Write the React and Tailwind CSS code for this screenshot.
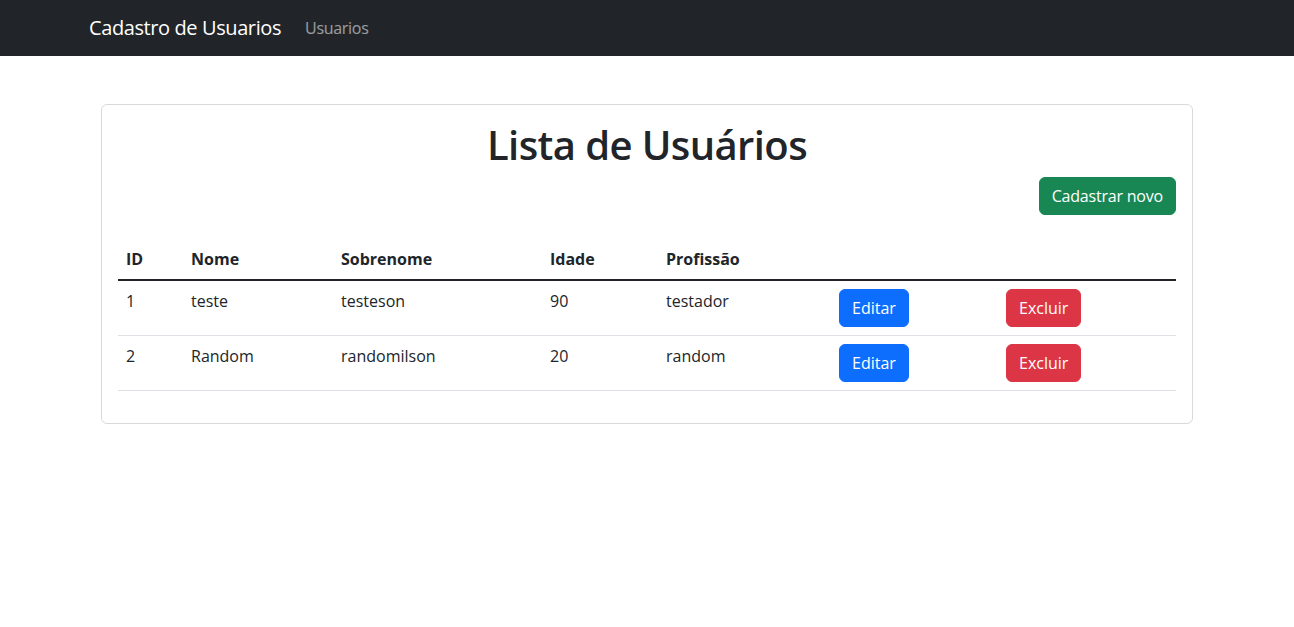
import React from "react";

const users = [
  { id: 1, nome: "teste", sobrenome: "testeson", idade: 90, profissao: "testador" },
  { id: 2, nome: "Random", sobrenome: "randomilson", idade: 20, profissao: "random" },
];

const font = { fontFamily: '"Open Sans", "Noto Sans", sans-serif' };

export default function App() {
  return (
    <div className="min-h-screen bg-white text-[#212529] text-base" style={font}>
      {/* Navbar */}
      <nav className="bg-[#212529] h-14 flex items-center">
        <div className="w-[1140px] mx-auto px-3 flex items-center">
          <span className="text-white text-xl leading-[30px] mr-4 tracking-[-0.4px]">Cadastro de Usuarios</span>
          <span className="text-white/55 px-2 leading-6 tracking-[-0.3px]">Usuarios</span>
        </div>
      </nav>

      {/* Main */}
      <div className="w-[1140px] mx-auto px-3">
        <div className="mx-3 mt-12 border border-black/15 rounded-md p-4">
          <h1 className="text-center text-[40px] leading-[48px] font-semibold tracking-[-0.6px] mb-2">Lista de Usuários</h1>
          <div className="flex justify-end mb-6">
            <button className="bg-[#198754] border border-[#198754] text-white px-3 py-1.5 leading-6 rounded-md tracking-[-0.2px]">
              Cadastrar novo
            </button>
          </div>
          <table className="w-full table-fixed mb-4 text-left">
            <colgroup>
              <col className="w-[65px]" />
              <col className="w-[150px]" />
              <col className="w-[209px]" />
              <col className="w-[116px]" />
              <col className="w-[173px]" />
              <col className="w-[167px]" />
              <col />
            </colgroup>
            <thead>
              <tr className="border-b border-[#dee2e6]">
                <th className="p-2 leading-6 font-bold">ID</th>
                <th className="p-2 leading-6 font-bold">Nome</th>
                <th className="p-2 leading-6 font-bold">Sobrenome</th>
                <th className="p-2 leading-6 font-bold">Idade</th>
                <th className="p-2 leading-6 font-bold">Profissão</th>
                <th className="p-2"></th>
                <th className="p-2"></th>
              </tr>
            </thead>
            <tbody className="border-t-2 border-[#212529]">
              {users.map((u) => (
                <tr key={u.id} className="border-b border-[#dee2e6]">
                  <td className="p-2 leading-6 align-top">{u.id}</td>
                  <td className="p-2 leading-6 align-top">{u.nome}</td>
                  <td className="p-2 leading-6 align-top">{u.sobrenome}</td>
                  <td className="p-2 leading-6 align-top">{u.idade}</td>
                  <td className="p-2 leading-6 align-top">{u.profissao}</td>
                  <td className="p-2 align-top">
                    <button className="bg-[#0d6efd] border border-[#0d6efd] text-white px-3 py-1.5 leading-6 rounded-md">
                      Editar
                    </button>
                  </td>
                  <td className="p-2 align-top">
                    <button className="bg-[#dc3545] border border-[#dc3545] text-white px-3 py-1.5 leading-6 rounded-md">
                      Excluir
                    </button>
                  </td>
                </tr>
              ))}
            </tbody>
          </table>
        </div>
      </div>
    </div>
  );
}
